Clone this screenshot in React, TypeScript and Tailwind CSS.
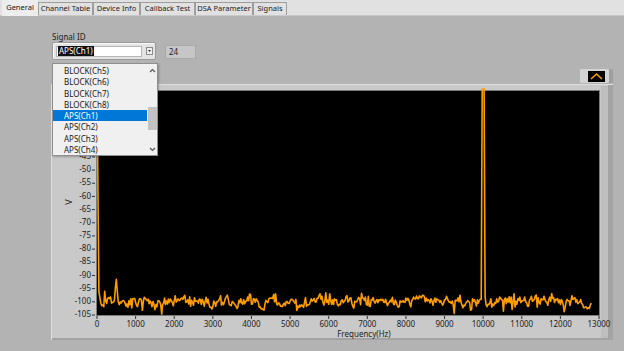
import { useMemo } from 'react'

const FONT = '"Noto Sans", "Open Sans", Arial, sans-serif'

// plot geometry, relative to the graph panel (panel sits at x 51, y 85)
const PX0 = 46
const PX1 = 548
const PY0 = 7
const PY1 = 231

const fx = (f: number) => PX0 + (f / 13000) * (PX1 - PX0)
const vy = (v: number) => PY0 + ((-20 - v) / 85) * (PY1 - PY0)

function mulberry32(seed: number) {
  let a = seed
  return () => {
    a |= 0
    a = (a + 0x6d2b79f5) | 0
    let t = Math.imul(a ^ (a >>> 15), 1 | a)
    t = (t + Math.imul(t ^ (t >>> 7), 61 | t)) ^ t
    return ((t ^ (t >>> 14)) >>> 0) / 4294967296
  }
}

function buildTrace() {
  const rand = mulberry32(11)
  const pts: [number, number][] = []
  let prev = 0
  for (let f = 0; f <= 12800; f += 25) {
    prev = prev * 0.55 + (rand() - 0.5) * 3.4
    let v = -99.9 + prev
    if (rand() > 0.94) v += 1.5 + rand() * 1.5
    if (rand() > 0.95) v -= 1.2 + rand() * 1.5
    if (f === 0) v = -15
    if (f === 25) v = -60
    if (f === 50) v = -96
    if (f === 75) v = -98.5
    if (f === 200) v = -96
    if (f === 475) v = -95
    if (f === 500) v = -91.5
    if (f === 525) v = -96
    if (f === 1500) v = -103
    if (f === 9950) v = -99
    if (f === 9975) v = -18
    if (f === 10000) v = -15
    if (f === 10025) v = -18
    if (f === 10050) v = -98
    if (f === 10800) v = -97
    if (f >= 12600 && f <= 12750) v = -101.8 - rand()
    if (f === 12800) v = -100.5
    pts.push([fx(f), Math.max(PY0 - 2, vy(v))])
  }
  return pts.map(([x, y], i) => `${i ? 'L' : 'M'}${x.toFixed(1)} ${y.toFixed(1)}`).join(' ')
}

const tabs = [
  { label: 'General', w: 'w-[36px]', active: true },
  { label: 'Channel Table', w: 'w-[55px]' },
  { label: 'Device Info', w: 'w-[47px]' },
  { label: 'Callback Test', w: 'w-[55px]' },
  { label: 'DSA Parameter', w: 'w-[58px]' },
  { label: 'Signals', w: 'w-[34px]' },
]

const listItems = [
  'BLOCK(Ch5)',
  'BLOCK(Ch6)',
  'BLOCK(Ch7)',
  'BLOCK(Ch8)',
  'APS(Ch1)',
  'APS(Ch2)',
  'APS(Ch3)',
  'APS(Ch4)',
]

function Graph() {
  const trace = useMemo(() => buildTrace(), [])
  // labels above -45 sit under the open list, so only the visible ones are drawn
  const yTicks: number[] = []
  for (let v = -45; v >= -105; v -= 5) yTicks.push(v)
  const xTicks: number[] = []
  for (let f = 0; f <= 13000; f += 1000) xTicks.push(f)

  return (
    <div className="h-[256px] w-[562px] bg-[#c9c9c9] shadow-[inset_1px_1px_0_#dedede,inset_-5px_-2px_0_#a3a3a3]">
      <svg width={562} height={256} style={{ fontFamily: FONT }}>
        <rect x={550} y={2} width={7} height={252} fill="#bebebe" />
        <rect x={PX0 - 1} y={PY0 - 1} width={PX1 - PX0 + 2} height={PY1 - PY0 + 2} fill="#7a7a7a" />
        <rect x={PX0} y={PY0} width={PX1 - PX0} height={PY1 - PY0} fill="#000" />
        <path d={trace} fill="none" stroke="#ff9c00" strokeWidth={1.6} strokeLinejoin="round" />
        {yTicks.map((v) => (
          <g key={v}>
            <line x1={41} x2={44} y1={vy(v)} y2={vy(v)} stroke="#333" />
            <text x={40} y={vy(v)} fontSize={8} textAnchor="end" dominantBaseline="middle" fill="#222">
              {v}
            </text>
          </g>
        ))}
        {xTicks.map((f) => (
          <g key={f}>
            <line x1={fx(f)} x2={fx(f)} y1={PY1 + 1} y2={PY1 + 4} stroke="#333" />
            <text x={fx(f)} y={PY1 + 9.5} fontSize={8} textAnchor="middle" dominantBaseline="middle" fill="#222">
              {f}
            </text>
          </g>
        ))}
        <text x={313} y={251} fontSize={8} textAnchor="middle" dominantBaseline="middle" fill="#222">
          Frequency(Hz)
        </text>
        <text
          x={19}
          y={118}
          fontSize={9}
          textAnchor="middle"
          dominantBaseline="middle"
          fill="#222"
          transform="rotate(-90 19 118)"
        >
          V
        </text>
      </svg>
    </div>
  )
}

function SignalList() {
  return (
    <div className="absolute left-[52px] top-[47px] flex h-[93px] w-[106px] border border-[#8f8f8f] bg-[#f0f0f0] shadow-[1px_1px_2px_rgba(0,0,0,0.25)]">
      <div className="flex-1 pt-[1px]">
        {listItems.map((item) => (
          <div
            key={item}
            className={
              item === 'APS(Ch1)'
                ? 'h-[11.3px] whitespace-nowrap bg-[#0078d7] pl-[11px] text-[8px] leading-[11.3px] text-white'
                : 'h-[11.3px] whitespace-nowrap pl-[11px] text-[8px] leading-[11.3px] text-[#1a1a1a]'
            }
          >
            {item}
          </div>
        ))}
      </div>
      <div className="flex w-[10px] flex-col items-center bg-[#f0f0f0]">
        <svg width={7} height={5} viewBox="0 0 7 5" className="mt-[4px]">
          <path d="M1 4 L3.5 1.5 L6 4" fill="none" stroke="#555" strokeWidth={1.2} />
        </svg>
        <div className="mt-[34px] h-[23px] w-[9px] bg-[#c2c2c2]" />
        <svg width={7} height={5} viewBox="0 0 7 5" className="mt-auto mb-[3px]">
          <path d="M1 1 L3.5 3.5 L6 1" fill="none" stroke="#555" strokeWidth={1.2} />
        </svg>
      </div>
    </div>
  )
}

export default function App() {
  return (
    <div className="h-[351px] w-[624px] overflow-hidden bg-[#b3b3b3]" style={{ fontFamily: FONT }}>
      <div className="flex h-[16px] border-b border-[#c9c9c9] bg-[#e1e1e1] pl-[2px]">
        {tabs.map((t) =>
          t.active ? (
            <div
              key={t.label}
              className={`${t.w} flex h-[16px] items-center justify-center whitespace-nowrap bg-[#ededed] text-[7.5px] text-[#111]`}
            >
              {t.label}
            </div>
          ) : (
            <div
              key={t.label}
              className={`${t.w} mt-[2px] flex h-[13px] items-center justify-center whitespace-nowrap border-r border-l border-t border-[#9e9e9e] bg-[#e1e1e1] text-[7.5px] text-[#222]`}
            >
              {t.label}
            </div>
          ),
        )}
      </div>

      <div className="relative pl-[51px] pt-[15px]">
        <div className="ml-[1px] h-[11px] text-[8px] leading-[11px] text-[#222]">Signal ID</div>

        <div className="flex items-start">
          <div className="ml-[1px] flex h-[18px] w-[104px] items-center rounded-[2px] border border-[#9a9a9a] bg-[#e4e4e4] pl-[3px] shadow-[inset_1px_1px_0_#fafafa]">
            <div className="flex h-[11px] w-[86px] items-center border border-[#b5b5b5] bg-white pl-[1px]">
              <span className="bg-[#111] px-[1px] text-[8px] leading-[10px] text-white">APS(Ch1)</span>
            </div>
            <div className="ml-[4px] flex h-[8px] w-[7px] items-center justify-center border border-[#8c8c8c] bg-[#efefef]">
              <svg width={3} height={2} viewBox="0 0 3 2">
                <path d="M0 0 H3 L1.5 2 Z" fill="#333" />
              </svg>
            </div>
          </div>
          <div className="ml-[9px] mt-[3px] flex h-[14px] w-[31px] items-center border border-[#a9a9a9] bg-[#c6c6c6] pl-[3px] text-[8px] text-[#222]">
            24
          </div>
        </div>

        <div className="mt-[9px] flex h-[14px] justify-end pr-[11px]">
          <div className="flex h-[14px] w-[33px] items-center rounded-[1px] bg-[#d3d3d3] pl-[8px] shadow-[inset_-4px_0_0_#9f9f9f]">
            <div className="flex h-[11px] w-[17px] items-center justify-center bg-black">
              <svg width={13} height={8} viewBox="0 0 13 8">
                <path d="M1 7 L6.5 2 L12 7" fill="none" stroke="#ff9c00" strokeWidth={1.6} />
              </svg>
            </div>
          </div>
        </div>

        <div className="mt-[1px]">
          <Graph />
        </div>

        <SignalList />
      </div>
    </div>
  )
}
